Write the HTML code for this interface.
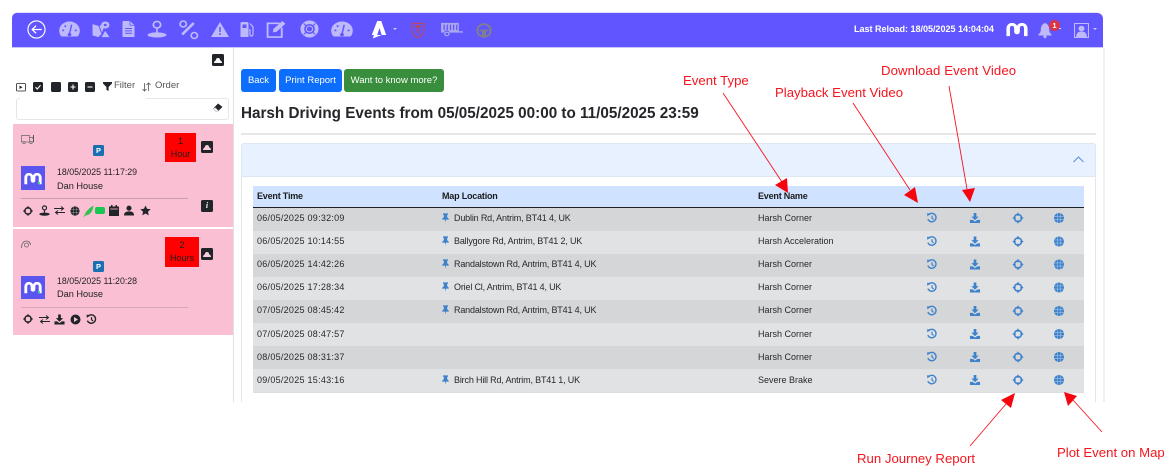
<!DOCTYPE html>
<html><head><meta charset="utf-8">
<style>
html,body{margin:0;padding:0;width:1174px;height:474px;overflow:hidden;background:#fff;font-family:"Liberation Sans",sans-serif;color:#212529}
.a{position:absolute;white-space:nowrap}
svg.i{position:absolute;overflow:visible}
.btn{position:absolute;top:69px;height:23px;line-height:23px;text-align:center;color:#fff;font-size:9.5px;border-radius:3px;background:#0d6efd}
.row{position:absolute;left:253px;width:831px;height:23px}
.t{position:absolute;font-size:9px;line-height:12px;white-space:nowrap;color:#26282b}
.d{letter-spacing:.27px}
.m{letter-spacing:-.17px}
.th{position:absolute;font-size:9px;font-weight:bold;top:190px;line-height:12px;color:#1a1c1e;letter-spacing:-.2px}
.red{position:absolute;color:#f5141e;font-size:13.2px;line-height:15px;white-space:nowrap}
.sq{position:absolute;width:10px;height:10px;background:#212529;border-radius:1.5px}
.bk{position:absolute;color:#555;font-size:9.5px;line-height:11px;white-space:nowrap}
.nm{font-size:9.2px!important;color:#222}
.dt{font-size:8.8px!important;color:#222}
</style></head><body>
<svg width="0" height="0" style="position:absolute">
<defs>
<symbol id="hist" viewBox="0 0 12 12"><path d="M2.2 2.6A4.6 4.6 0 1 1 1.5 7.2" fill="none" stroke="currentColor" stroke-width="1.5"/><path d="M.6 .8l3.6.3L1 4.3z" fill="currentColor"/><path d="M6 3.4V6.2l1.8 1.3" fill="none" stroke="currentColor" stroke-width="1.3"/></symbol>
<symbol id="dl" viewBox="0 0 12 12"><path d="M4.5.5h3v4H10L6 8.4 2 4.500h2.500z" fill="currentColor"/><path d="M.5 8h3l2.500 2 2.500-2h3v3.500H.5z" fill="currentColor"/></symbol>
<symbol id="tgt" viewBox="0 0 12 12"><circle cx="6" cy="6" r="3.900" fill="none" stroke="currentColor" stroke-width="1.700"/><path d="M6 .3v3.200M6 8.500v3.200M.3 6h3.200M8.500 6h3.200" stroke="currentColor" stroke-width="1.500"/></symbol>
<symbol id="globe" viewBox="0 0 12 12"><circle cx="6" cy="6" r="5.500" fill="currentColor"/><path d="M.8 4.300h10.400M.8 7.700h10.400M4.300 1v10M7.700 1v10" stroke="#fff" stroke-opacity=".5" stroke-width=".6"/></symbol>
<symbol id="pin" viewBox="0 0 10 12"><path d="M2 .5h6v1.200L7 2.500V5l2 2v1H5.600L5 11.500 4.400 8H1V7l2-2V2.500L2 1.700z" fill="currentColor"/></symbol>
<symbol id="gauge" viewBox="0 0 20 17" preserveAspectRatio="none"><path d="M10 .5C4.500.5.200 4.800.200 10.300c0 2.400.8 4.500 2.100 6.200h15.400c1.300-1.700 2.100-3.800 2.100-6.200C19.800 4.800 15.500.5 10 .5z" fill="currentColor"/><path d="M10 14l2-10" stroke="#6055ff" stroke-width="1.300"/><circle cx="4" cy="10" r="1" fill="#6055ff"/><circle cx="6" cy="5.500" r="1" fill="#6055ff"/><circle cx="16" cy="10" r="1" fill="#6055ff"/><circle cx="10" cy="14.500" r="1.700" fill="#6055ff"/></symbol>
<symbol id="logo" viewBox="0 0 20 15" preserveAspectRatio="none"><path d="M2 14V6c0-6 7-6 7 0v3c0 2 2 2 2 0V6c0-6 7-6 7 0v8" fill="none" stroke="currentColor" stroke-width="3.200"/></symbol>
</defs>
</svg>

<!-- navbar -->
<div class="a" style="left:12px;top:13px;width:1091px;height:34px;background:#6055ff;border-radius:5px 6px 0 0;box-shadow:0 -.5px 0 #c4c0ee,0 1px 0 #c9c6f8"></div>
<svg class="i" style="left:27px;top:20px;color:#fff" width="19" height="19" viewBox="0 0 20 20"><circle cx="10" cy="10" r="9" fill="none" stroke="currentColor" stroke-width="1.200"/><path d="M15.500 10H5.500M9.500 6 5.500 10 9.500 14" fill="none" stroke="currentColor" stroke-width="1.400"/></svg>
<svg class="i" style="left:59px;top:21px;color:#bdb9fb" width="21" height="16"><use href="#gauge" width="21" height="16"/></svg>
<svg class="i" style="left:92px;top:21px;color:#bdb9fb" width="18" height="17" viewBox="0 0 17 19" preserveAspectRatio="none"><path d="M.5 3.500 6 5.500l3 9-3 3.500-5.500-2z" fill="currentColor"/><path d="M7 5.500 10 4l1 4-1.500 5zM9 18l3.500-7L16.500 18z" fill="currentColor"/><circle cx="12.500" cy="4.500" r="4" fill="currentColor"/><circle cx="12.500" cy="4.500" r="1.400" fill="#6055ff"/></svg>
<svg class="i" style="left:122px;top:21px;color:#bdb9fb" width="13" height="16" viewBox="0 0 13 17" preserveAspectRatio="none"><path d="M1 0h7l4.500 4.500V17H1a1 1 0 0 1-.5-1V1z" fill="currentColor"/><path d="M3 8h7M3 10.500h7M3 13h7" stroke="#6055ff" stroke-width="1"/><path d="M8 0v4.500h4.500" fill="none" stroke="#6055ff" stroke-width=".8"/></svg>
<svg class="i" style="left:147px;top:20px;color:#bdb9fb" width="20" height="18" viewBox="0 0 19 19" preserveAspectRatio="none"><circle cx="9.500" cy="5" r="3.500" fill="none" stroke="currentColor" stroke-width="1.700"/><path d="M9.500 8.500v5" stroke="currentColor" stroke-width="1.500"/><ellipse cx="9.500" cy="15.800" rx="9" ry="2.700" fill="currentColor"/></svg>
<svg class="i" style="left:179px;top:20px;color:#bdb9fb" width="19" height="19" viewBox="0 0 18 19" preserveAspectRatio="none"><path d="M3 14.500 14 3" stroke="currentColor" stroke-width="2.600"/><circle cx="4" cy="4" r="3" fill="none" stroke="currentColor" stroke-width="1.600"/><circle cx="14.500" cy="15.500" r="3" fill="none" stroke="currentColor" stroke-width="1.600"/></svg>
<svg class="i" style="left:211px;top:22px;color:#bdb9fb" width="18" height="15" viewBox="0 0 17 15" preserveAspectRatio="none"><path d="M8.500 0 17 15H0z" fill="currentColor"/><path d="M8.500 5v5M8.500 11v2" stroke="#6055ff" stroke-width="1.400"/></svg>
<svg class="i" style="left:240px;top:22px;color:#bdb9fb" width="14" height="15" viewBox="0 0 14 15"><path d="M.5 1.500Q.500 0 2 0h5q1.500 0 1.500 1.500V15H.5z" fill="currentColor"/><path d="M2.500 2.500h4V6h-4z" fill="#6055ff"/><path d="M10 1.500 13 5v7q0 2-1.500 2T10 12.500V8H9" fill="none" stroke="currentColor" stroke-width="1.200"/></svg>
<svg class="i" style="left:266px;top:20px;color:#bdb9fb" width="21" height="18" viewBox="0 0 20 19" preserveAspectRatio="none"><path d="M13 3.500H1.500V18H15V8" fill="none" stroke="currentColor" stroke-width="1.800"/><path d="M7 9.500 15.500 1l3 3-8.500 8.500-3.500.6z" fill="currentColor"/></svg>
<svg class="i" style="left:300px;top:20px;color:#bdb9fb" width="19" height="18" viewBox="0 0 18 18" preserveAspectRatio="none"><circle cx="9" cy="9" r="6.800" fill="none" stroke="currentColor" stroke-width="3.500"/><circle cx="9" cy="9" r="3" fill="none" stroke="currentColor" stroke-width="1"/><path d="M3.500 3.500l3 3M14.500 3.500l-3 3M3.500 14.500l3-3M14.500 14.500l-3-3" stroke="#6055ff" stroke-width="1"/></svg>
<svg class="i" style="left:331px;top:21px;color:#bdb9fb" width="22" height="16"><use href="#gauge" width="22" height="16"/></svg>
<svg class="i" style="left:370px;top:20px" width="18" height="19" viewBox="0 0 20 19" preserveAspectRatio="none"><path d="M8 1h4.500l5.500 14h-5L10.500 8 8 15H13L3 18.500 4.500 15H2z" fill="#fff"/></svg>
<div class="a" style="left:393px;top:28px;border:2px solid transparent;border-top:2.500px solid #cfcdfd;border-bottom:0"></div>
<svg class="i" style="left:411px;top:22px;color:#c4454f" width="14" height="16" viewBox="0 0 15 17" preserveAspectRatio="none" fill="none"><path d="M1 1.500h13V9c0 3.500-3 6-6.500 7.500C4 15 1 12.500 1 9z" stroke="currentColor" stroke-width="1.100"/><path d="M4 4.500h7M7.500 4.500V12" stroke="currentColor" stroke-width="1.800"/></svg>
<svg class="i" style="left:440px;top:22px;color:#aba7ef" width="23" height="15" viewBox="0 0 22 17" preserveAspectRatio="none"><path d="M1 1h17v9.500h4V12H9a2.500 2.500 0 0 0-5 0H1z" fill="currentColor"/><path d="M4 3v6M7 3v6M10 3v6M13 3v6M16 3v6" stroke="#6055ff" stroke-width="1.200"/><circle cx="6.500" cy="13.500" r="2" fill="none" stroke="currentColor" stroke-width="1.300"/></svg>
<svg class="i" style="left:476px;top:23px;color:#7f7f8f" width="16" height="15" viewBox="0 0 16 16" preserveAspectRatio="none"><circle cx="8" cy="8" r="6.700" fill="none" stroke="currentColor" stroke-width="2"/><path d="M2 7h12L10 9.500V15H6V9.500z" fill="currentColor"/></svg>
<div class="a" style="left:854px;top:23px;color:#fff;font-size:9.1px;line-height:12px;font-weight:bold;letter-spacing:-.05px">Last Reload: 18/05/2025 14:04:04</div>
<svg class="i" style="left:1006px;top:23px;color:#fff" width="22" height="14"><use href="#logo" width="22" height="14"/></svg>
<svg class="i" style="left:1038px;top:23px;color:#bdb9fb" width="14" height="15" viewBox="0 0 15 15" preserveAspectRatio="none"><path d="M7.500 0C4 1 3 4 3 7c0 2-1 3-2.500 4.500v1h14v-1C13 10 12 9 12 7c0-3-1-6-4.500-7z" fill="currentColor"/><circle cx="7.500" cy="13.500" r="1.700" fill="currentColor"/></svg>
<div class="a" style="left:1049px;top:19.500px;width:11px;height:11px;border-radius:50%;background:#dc3545;color:#fff;font-size:7.500px;font-weight:bold;line-height:11px;text-align:center">1</div>
<svg class="i" style="left:1074px;top:23px;color:#bdb9fb" width="15" height="15" viewBox="0 0 14 15" preserveAspectRatio="none"><rect x=".5" y=".5" width="13" height="14" fill="none" stroke="currentColor"/><circle cx="7" cy="5.500" r="2.800" fill="currentColor"/><path d="M2 14c0-4 2-5.500 5-5.500s5 1.500 5 5.500z" fill="currentColor"/></svg>
<div class="a" style="left:1059px;top:28px;width:2px;height:1px;background:#cfcdfd"></div>
<div class="a" style="left:1093px;top:28px;border:2px solid transparent;border-top:2.500px solid #cfcdfd;border-bottom:0"></div>

<!-- sidebar + divider -->
<div class="a" style="left:233px;top:48px;width:1px;height:354px;background:#e2e2e2"></div>
<div class="a" style="left:1103px;top:48px;width:2px;height:354px;background:#f0f0f0"></div>
<div class="sq" style="left:212px;top:54px;width:12px;height:12px"><div style="position:absolute;left:2px;top:6px;width:8px;height:3px;background:#fff;border-radius:3px 3px 0 0"></div><div style="position:absolute;left:4px;top:3.500px;width:4px;height:3px;background:#fff;border-radius:2px 2px 0 0"></div></div>
<svg class="i" style="left:16px;top:83px" width="10" height="9"><rect x=".5" y=".5" width="9" height="7.500" rx="1" fill="none" stroke="#212529" stroke-width=".8"/><path d="M3.500 2.500 6.500 4.300 3.500 6z" fill="#212529"/></svg>
<div class="sq" style="left:33px;top:82px"><svg width="10" height="10" style="position:absolute"><path d="M2.500 5.200 4.300 7 7.500 3.200" stroke="#fff" stroke-width="1.100" fill="none"/></svg></div>
<div class="sq" style="left:51px;top:82px"></div>
<div class="sq" style="left:68px;top:82px"><svg width="10" height="10" style="position:absolute"><path d="M2.500 5h5M5 2.500v5" stroke="#fff" stroke-width="1.100"/></svg></div>
<div class="sq" style="left:85px;top:82px"><svg width="10" height="10" style="position:absolute"><path d="M2.500 5h5" stroke="#fff" stroke-width="1.100"/></svg></div>
<svg class="i" style="left:103px;top:82px" width="9" height="9"><path d="M0 0h9v1.500L5.600 5v4L3.400 7.800V5L0 1.500z" fill="#212529"/></svg>
<div class="bk" style="left:114px;top:80px">Filter</div>
<svg class="i" style="left:142px;top:82px" width="9" height="10" fill="none" stroke="#555" stroke-width=".8"><path d="M2.500 1v8M.5 7l2 2 2-2M6.500 9V1M4.500 3l2-2 2 2"/></svg>
<div class="bk" style="left:155px;top:80px">Order</div>
<div class="a" style="left:16px;top:98px;width:211px;height:20px;border:1px solid #e3e6ea;border-radius:3px"></div>
<div class="a" style="left:20px;top:97px;width:126px;height:3px;background:#fff"></div>
<svg class="i" style="left:212px;top:103px" width="11" height="10" viewBox="0 0 10 9" preserveAspectRatio="none"><path d="M5.500.5 9.500 3.500 5 8H3.500L.8 5.300z" fill="#212529"/><path d="M.8 5.300 3.500 8H5L6 7 3 4z" fill="#e8e8e8"/></svg>

<!-- card 1 -->
<div class="a" style="left:13px;top:124px;width:220px;height:103px;background:#fbbfd3"></div>
<svg class="i" style="left:21px;top:135px" width="13" height="9" fill="none" stroke="#666" stroke-width=".7"><path d="M.5 .5H8.500V7H.5zM8.500 2.500H11.500L12.500 4.500V7H8.500"/><circle cx="3" cy="7.500" r="1.200" fill="#fbbfd3"/><circle cx="10" cy="7.500" r="1.200" fill="#fbbfd3"/></svg>
<div class="a" style="left:33px;top:135px;width:1px;height:7px;background:#555"></div>
<div class="a" style="left:93px;top:145px;width:11px;height:11px;background:#1a6fb2;border-radius:1.500px;color:#fff;font-size:7.500px;font-weight:bold;line-height:11px;text-align:center">P</div>
<div class="a" style="left:165px;top:133px;width:31px;height:29px;background:#ff0000;color:#1d1d1d;font-size:9px;line-height:13px;text-align:center;padding-top:2px;box-sizing:border-box">1<br>Hour</div>
<div class="sq" style="left:201px;top:141px;width:12px;height:12px"><div style="position:absolute;left:2px;top:6px;width:8px;height:3px;background:#f7cfdc;border-radius:3px 3px 0 0"></div><div style="position:absolute;left:4px;top:3.500px;width:4px;height:3px;background:#f7cfdc;border-radius:2px 2px 0 0"></div></div>
<div class="a" style="left:21px;top:166px;width:24px;height:24px;background:#5b55f0"><svg width="18" height="12" style="position:absolute;left:3px;top:7px;color:#fff"><use href="#logo" width="18" height="12"/></svg><div style="position:absolute;left:17px;top:16px;width:2px;height:2px;background:#3fe07a"></div></div>
<div class="t dt" style="left:57px;top:166px">18/05/2025 11:17:29</div>
<div class="t nm" style="left:57px;top:180px">Dan House</div>
<div class="a" style="left:21px;top:198px;width:167px;height:1px;background:#c7a0ae"></div>
<svg class="i" style="left:23px;top:206px;color:#212529" width="10" height="10"><use href="#tgt" width="10" height="10"/></svg>
<svg class="i" style="left:39px;top:205px;color:#212529" width="11" height="11" viewBox="0 0 19 19"><circle cx="9.500" cy="5" r="3.500" fill="none" stroke="currentColor" stroke-width="2"/><path d="M9.500 8.500v5" stroke="currentColor" stroke-width="2"/><ellipse cx="9.500" cy="15.800" rx="9" ry="2.700" fill="currentColor"/></svg>
<svg class="i" style="left:54px;top:206px" width="11" height="9" fill="none" stroke="#212529" stroke-width="1"><path d="M0 2.500h9M7 .5l2.500 2-2.500 2M11 6.500H2M4 4.500l-2.500 2 2.500 2"/></svg>
<svg class="i" style="left:70px;top:206px;color:#212529" width="10" height="10"><use href="#globe" width="10" height="10"/></svg>
<svg class="i" style="left:83px;top:205px" width="11" height="13" viewBox="0 0 11 13"><path d="M.5 12.500C2 9 3 5 10.500.5 10 5 8 10 2.500 10.500z" fill="#2fc24f"/></svg>
<div class="a" style="left:95px;top:207px;width:10px;height:7px;background:#17c653;border-radius:2px"></div>
<svg class="i" style="left:109px;top:205px" width="10" height="11" viewBox="0 0 10 11"><path d="M0 1.500h10V11H0zM2 0h1.500v2H2zM6.500 0H8v2H6.500z" fill="#212529"/><path d="M1.200 4h7.600" stroke="#fbbfd3" stroke-width=".8"/></svg>
<svg class="i" style="left:124px;top:205px" width="10" height="11" viewBox="0 0 11 11"><circle cx="5.500" cy="3" r="2.800" fill="#212529"/><path d="M0 11c0-3.500 2-4.500 5.500-4.500S11 7.500 11 11z" fill="#212529"/></svg>
<svg class="i" style="left:140px;top:205px" width="11" height="11" viewBox="0 0 24 24"><path d="M12 1l3.400 7.300 7.800.9-5.800 5.400 1.600 7.900L12 18.600 5 22.500l1.600-7.900L.8 9.200l7.800-.9z" fill="#212529"/></svg>
<div class="sq" style="left:201px;top:200px;width:12px;height:12px;color:#fff;font:italic bold 8px/12px 'Liberation Serif',serif;text-align:center">i</div>

<!-- card 2 -->
<div class="a" style="left:13px;top:229px;width:220px;height:106px;background:#fbbfd3"></div>
<svg class="i" style="left:21px;top:240px" width="10" height="9" fill="none" stroke="#666" stroke-width=".8"><path d="M.5 8C.500 3 3 1 5 1s4.500 1 4.500 4"/><circle cx="5.500" cy="5" r="2"/></svg>
<div class="a" style="left:165px;top:237px;width:34px;height:30px;background:#ff0000;color:#1d1d1d;font-size:9px;line-height:13px;text-align:center;padding-top:2px;box-sizing:border-box">2<br>Hours</div>
<div class="sq" style="left:201px;top:248px;width:12px;height:12px"><div style="position:absolute;left:2px;top:6px;width:8px;height:3px;background:#f7cfdc;border-radius:3px 3px 0 0"></div><div style="position:absolute;left:4px;top:3.500px;width:4px;height:3px;background:#f7cfdc;border-radius:2px 2px 0 0"></div></div>
<div class="a" style="left:93px;top:261px;width:11px;height:11px;background:#1a6fb2;border-radius:1.500px;color:#fff;font-size:7.500px;font-weight:bold;line-height:11px;text-align:center">P</div>
<div class="a" style="left:21px;top:276px;width:24px;height:23px;background:#5b55f0"><svg width="18" height="12" style="position:absolute;left:3px;top:6px;color:#fff"><use href="#logo" width="18" height="12"/></svg><div style="position:absolute;left:17px;top:15px;width:2px;height:2px;background:#3fe07a"></div></div>
<div class="t dt" style="left:57px;top:275px">18/05/2025 11:20:28</div>
<div class="t nm" style="left:57px;top:288px">Dan House</div>
<div class="a" style="left:21px;top:307px;width:167px;height:1px;background:#d9a8b8"></div>
<svg class="i" style="left:23px;top:314px;color:#212529" width="10" height="10"><use href="#tgt" width="10" height="10"/></svg>
<svg class="i" style="left:39px;top:315px" width="11" height="9" fill="none" stroke="#212529" stroke-width="1"><path d="M0 2.500h9M7 .5l2.500 2-2.500 2M11 6.500H2M4 4.500l-2.500 2 2.500 2"/></svg>
<svg class="i" style="left:54px;top:314px;color:#212529" width="11" height="11"><use href="#dl" width="11" height="11"/></svg>
<svg class="i" style="left:70px;top:314px" width="11" height="11" viewBox="0 0 11 11"><circle cx="5.500" cy="5.500" r="5" fill="#212529"/><path d="M4 3 8 5.500 4 8z" fill="#fbbfd3"/></svg>
<svg class="i" style="left:86px;top:314px;color:#212529" width="11" height="11"><use href="#hist" width="11" height="11"/></svg>

<!-- main -->
<div class="btn" style="left:241px;width:35px">Back</div>
<div class="btn" style="left:279px;width:63px">Print Report</div>
<div class="btn" style="left:344px;width:100px;background:#388e3c">Want to know more?</div>
<div class="a" style="left:241px;top:104px;font-size:15.25px;line-height:20px;font-weight:bold;color:#24262a">Harsh Driving Events from 05/05/2025 00:00 to 11/05/2025 23:59</div>
<div class="a" style="left:241px;top:133px;width:855px;height:2px;background:#e6e6e6"></div>
<div class="a" style="left:241px;top:143px;width:853px;height:32px;background:#e7f1ff;border:1px solid #dee6f0;border-radius:3px 3px 0 0"></div>
<div class="a" style="left:241px;top:176px;width:1px;height:226px;background:#e3e6ea"></div>
<div class="a" style="left:1095px;top:176px;width:1px;height:226px;background:#e3e6ea"></div>
<svg class="i" style="left:1073px;top:156px" width="11" height="7" fill="none" stroke="#5a8fdc" stroke-width="1"><path d="M.5 6 5.500 1l5 5"/></svg>

<!-- table -->
<div class="a" style="left:253px;top:186px;width:831px;height:21px;background:#cfe2ff"></div>
<div class="a" style="left:253px;top:207px;width:831px;height:1.500px;background:#1d1f24"></div>
<div class="th" style="left:257px">Event Time</div>
<div class="th" style="left:442px">Map Location</div>
<div class="th" style="left:758px">Event Name</div>

<div class="row" style="top:208px;background:#d5d6d8"></div>
<div class="row" style="top:231px;background:#e1e2e4"></div>
<div class="row" style="top:254px;background:#d5d6d8"></div>
<div class="row" style="top:277px;background:#e1e2e4"></div>
<div class="row" style="top:300px;background:#d5d6d8"></div>
<div class="row" style="top:323px;background:#e1e2e4"></div>
<div class="row" style="top:346px;background:#d5d6d8"></div>
<div class="row" style="top:369px;background:#e1e2e4;border-bottom:1px solid #dcdde0"></div>

<div class="t d" style="left:257px;top:212px">06/05/2025 09:32:09</div><div class="t m" style="left:454px;top:212px">Dublin Rd, Antrim, BT41 4, UK</div><div class="t" style="left:758px;top:212px">Harsh Corner</div>
<div class="t d" style="left:257px;top:235px">06/05/2025 10:14:55</div><div class="t m" style="left:454px;top:235px">Ballygore Rd, Antrim, BT41 2, UK</div><div class="t" style="left:758px;top:235px">Harsh Acceleration</div>
<div class="t d" style="left:257px;top:258px">06/05/2025 14:42:26</div><div class="t m" style="left:454px;top:258px">Randalstown Rd, Antrim, BT41 4, UK</div><div class="t" style="left:758px;top:258px">Harsh Corner</div>
<div class="t d" style="left:257px;top:281px">06/05/2025 17:28:34</div><div class="t m" style="left:454px;top:281px">Oriel Cl, Antrim, BT41 4, UK</div><div class="t" style="left:758px;top:281px">Harsh Corner</div>
<div class="t d" style="left:257px;top:304px">07/05/2025 08:45:42</div><div class="t m" style="left:454px;top:304px">Randalstown Rd, Antrim, BT41 4, UK</div><div class="t" style="left:758px;top:304px">Harsh Corner</div>
<div class="t d" style="left:257px;top:328px">07/05/2025 08:47:57</div><div class="t" style="left:758px;top:328px">Harsh Corner</div>
<div class="t d" style="left:257px;top:351px">08/05/2025 08:31:37</div><div class="t" style="left:758px;top:351px">Harsh Corner</div>
<div class="t d" style="left:257px;top:374px">09/05/2025 15:43:16</div><div class="t m" style="left:454px;top:374px">Birch Hill Rd, Antrim, BT41 1, UK</div><div class="t" style="left:758px;top:374px">Severe Brake</div>

<svg class="i" style="left:0;top:0;color:#3f82cc" width="1174" height="474">
<use href="#pin" x="441" y="213" width="9" height="10"/><use href="#pin" x="441" y="236" width="9" height="10"/><use href="#pin" x="441" y="259" width="9" height="10"/><use href="#pin" x="441" y="282" width="9" height="10"/><use href="#pin" x="441" y="305" width="9" height="10"/><use href="#pin" x="441" y="375" width="9" height="10"/>
<use href="#hist" x="926.500" y="212.500" width="11" height="11"/><use href="#dl" x="969.500" y="212.500" width="11" height="11"/><use href="#tgt" x="1012.500" y="212.500" width="11" height="11"/><use href="#globe" x="1053.500" y="212.500" width="11" height="11"/>
<use href="#hist" x="926.500" y="236" width="11" height="11"/><use href="#dl" x="969.500" y="236" width="11" height="11"/><use href="#tgt" x="1012.500" y="236" width="11" height="11"/><use href="#globe" x="1053.500" y="236" width="11" height="11"/>
<use href="#hist" x="926.500" y="259" width="11" height="11"/><use href="#dl" x="969.500" y="259" width="11" height="11"/><use href="#tgt" x="1012.500" y="259" width="11" height="11"/><use href="#globe" x="1053.500" y="259" width="11" height="11"/>
<use href="#hist" x="926.500" y="282" width="11" height="11"/><use href="#dl" x="969.500" y="282" width="11" height="11"/><use href="#tgt" x="1012.500" y="282" width="11" height="11"/><use href="#globe" x="1053.500" y="282" width="11" height="11"/>
<use href="#hist" x="926.500" y="305.500" width="11" height="11"/><use href="#dl" x="969.500" y="305.500" width="11" height="11"/><use href="#tgt" x="1012.500" y="305.500" width="11" height="11"/><use href="#globe" x="1053.500" y="305.500" width="11" height="11"/>
<use href="#hist" x="926.500" y="328.500" width="11" height="11"/><use href="#dl" x="969.500" y="328.500" width="11" height="11"/><use href="#tgt" x="1012.500" y="328.500" width="11" height="11"/><use href="#globe" x="1053.500" y="328.500" width="11" height="11"/>
<use href="#hist" x="926.500" y="351.500" width="11" height="11"/><use href="#dl" x="969.500" y="351.500" width="11" height="11"/><use href="#tgt" x="1012.500" y="351.500" width="11" height="11"/><use href="#globe" x="1053.500" y="351.500" width="11" height="11"/>
<use href="#hist" x="926.500" y="374.500" width="11" height="11"/><use href="#dl" x="969.500" y="374.500" width="11" height="11"/><use href="#tgt" x="1012.500" y="374.500" width="11" height="11"/><use href="#globe" x="1053.500" y="374.500" width="11" height="11"/>
</svg>

<!-- annotations -->
<svg class="i" style="left:0;top:0" width="1174" height="474" fill="#f5060f" stroke="none">
<g stroke="#f5141e" stroke-width=".9"><path d="M723 93 782 182M853 103 910 190M949 86 967 189M970 446 1006 404M1102 432 1073 400"/></g>
<path d="M788 193 775 185 787 178zM918 203 904 195 915 187zM970 202 962 190 975 188zM1015 393 1001 400 1011 408zM1064 392 1077 396 1068 406z"/>
</svg>
<div class="red" style="left:683px;top:73px">Event Type</div>
<div class="red" style="left:775px;top:85px">Playback Event Video</div>
<div class="red" style="left:881px;top:63px;letter-spacing:.1px">Download Event Video</div>
<div class="red" style="left:857px;top:451px">Run Journey Report</div>
<div class="red" style="left:1057px;top:445px">Plot Event on Map</div>
</body></html>
